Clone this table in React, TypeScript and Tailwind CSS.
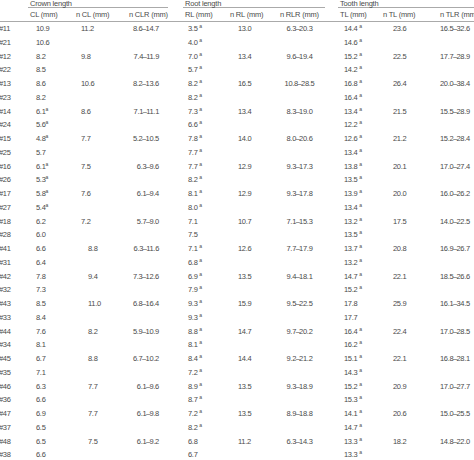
import React from "react";

type Row = string[];

// label, CL, nCL, nCLR, RL, nRL, nRLR, TL, nTL, nTLR  ("a" suffix = superscript)
const rows: Row[] = [
  ["#11", "10.9", "11.2", "8.6–14.7", "3.5a", "13.0", "6.3–20.3", "14.4a", "23.6", "16.5–32.6"],
  ["#21", "10.6", "", "", "4.0a", "", "", "14.6a", "", ""],
  ["#12", "8.2", "9.8", "7.4–11.9", "7.0a", "13.4", "9.6–19.4", "15.2a", "22.5", "17.7–28.9"],
  ["#22", "8.5", "", "", "5.7a", "", "", "14.2a", "", ""],
  ["#13", "8.6", "10.6", "8.2–13.6", "8.2a", "16.5", "10.8–28.5", "16.8a", "26.4", "20.0–38.4"],
  ["#23", "8.2", "", "", "8.2a", "", "", "16.4a", "", ""],
  ["#14", "6.1a", "8.6", "7.1–11.1", "7.3a", "13.4", "8.3–19.0", "13.4a", "21.5", "15.5–28.9"],
  ["#24", "5.6a", "", "", "6.6a", "", "", "12.2a", "", ""],
  ["#15", "4.8a", "7.7", "5.2–10.5", "7.8a", "14.0", "8.0–20.6", "12.6a", "21.2", "15.2–28.4"],
  ["#25", "5.7", "", "", "7.7a", "", "", "13.4a", "", ""],
  ["#16", "6.1a", "7.5", "6.3–9.6", "7.7a", "12.9", "9.3–17.3", "13.8a", "20.1", "17.0–27.4"],
  ["#26", "5.3a", "", "", "8.2a", "", "", "13.5a", "", ""],
  ["#17", "5.8a", "7.6", "6.1–9.4", "8.1a", "12.9", "9.3–17.8", "13.9a", "20.0", "16.0–26.2"],
  ["#27", "5.4a", "", "", "8.0a", "", "", "13.4a", "", ""],
  ["#18", "6.2", "7.2", "5.7–9.0", "7.1", "10.7", "7.1–15.3", "13.2a", "17.5", "14.0–22.5"],
  ["#28", "6.0", "", "", "7.5", "", "", "13.5a", "", ""],
  ["#41", "6.6", "8.8", "6.3–11.6", "7.1a", "12.6", "7.7–17.9", "13.7a", "20.8", "16.9–26.7"],
  ["#31", "6.4", "", "", "6.8a", "", "", "13.2a", "", ""],
  ["#42", "7.8", "9.4", "7.3–12.6", "6.9a", "13.5", "9.4–18.1", "14.7a", "22.1", "18.5–26.6"],
  ["#32", "7.3", "", "", "7.9a", "", "", "15.2a", "", ""],
  ["#43", "8.5", "11.0", "6.8–16.4", "9.3a", "15.9", "9.5–22.5", "17.8", "25.9", "16.1–34.5"],
  ["#33", "8.4", "", "", "9.3a", "", "", "17.7", "", ""],
  ["#44", "7.6", "8.2", "5.9–10.9", "8.8a", "14.7", "9.7–20.2", "16.4a", "22.4", "17.0–28.5"],
  ["#34", "8.1", "", "", "8.1a", "", "", "16.2a", "", ""],
  ["#45", "6.7", "8.8", "6.7–10.2", "8.4a", "14.4", "9.2–21.2", "15.1a", "22.1", "16.8–28.1"],
  ["#35", "7.1", "", "", "7.2a", "", "", "14.3a", "", ""],
  ["#46", "6.3", "7.7", "6.1–9.6", "8.9a", "13.5", "9.3–18.9", "15.2a", "20.9", "17.0–27.7"],
  ["#36", "6.6", "", "", "8.7a", "", "", "15.3a", "", ""],
  ["#47", "6.9", "7.7", "6.1–9.8", "7.2a", "13.5", "8.9–18.8", "14.1a", "20.6", "15.0–25.5"],
  ["#37", "6.5", "", "", "8.2a", "", "", "14.7a", "", ""],
  ["#48", "6.5", "7.5", "6.1–9.2", "6.8", "11.2", "6.3–14.3", "13.3a", "18.2", "14.8–22.0"],
  ["#38", "6.6", "", "", "6.7", "", "", "13.3a", "", ""],
];

const grid =
  "grid grid-cols-[37px_45px_35px_43px_79px_30px_63px_62px_47px_35px] ml-[-1px]";

function Val({ v, spaced }: { v: string; spaced?: boolean }) {
  if (!v.endsWith("a")) return <>{v}</>;
  return (
    <>
      {v.slice(0, -1)}
      {spaced && " "}
      <sup className="text-[5px] top-[-3px]">a</sup>
    </>
  );
}

// range like 8.6–14.7, dash squeezed a little
function Range({ v }: { v: string }) {
  if (!v) return null;
  const [a, b] = v.split("–");
  return (
    <>
      {a}
      <span className="mx-[-0.4px]">–</span>
      {b}
    </>
  );
}

export default function App() {
  return (
    <div
      className="w-[474px] h-[460px] overflow-hidden bg-white text-[#4a4a4a] text-[7.5px] tracking-[-0.3px]"
      style={{ fontFamily: '"Liberation Sans", Arial, sans-serif' }}
    >
      {/* group headers */}
      <div className="flex h-[8px] tracking-[-0.2px] whitespace-nowrap">
        <div className="w-[28px]" />
        <div className="w-[140px] border-b border-[#aaa] pl-[2px] leading-[8px] h-[8px]">
          Crown length
        </div>
        <div className="w-[15px]" />
        <div className="w-[142px] border-b border-[#aaa] pl-[2px] leading-[8px] h-[8px]">
          Root length
        </div>
        <div className="w-[13px]" />
        <div className="flex-1 border-b border-[#aaa] pl-[2px] leading-[8px] h-[8px]">
          Tooth length
        </div>
      </div>

      {/* column headers */}
      <div className="border-b border-[#aaa]">
        <div className={`${grid} h-[13px] leading-[13px] tracking-[-0.2px] whitespace-nowrap`}>
          <div />
          <div className="-ml-[6px]">CL (mm)</div>
          <div className="-ml-[5px]">n CL (mm)</div>
          <div className="pl-[13px]">n CLR (mm)</div>
          <div className="pl-[26px]">RL (mm)</div>
          <div className="-ml-[8px]">n RL (mm)</div>
          <div className="pl-[12px]">n RLR (mm)</div>
          <div className="pl-[9px]">TL (mm)</div>
          <div className="-ml-[10px]">n TL (mm)</div>
          <div>n TLR (mm)</div>
        </div>
      </div>

      {/* body */}
      <div>
        {rows.map((r, i) => (
          <div
            key={r[0]}
            className={`${grid} h-[13.75px] leading-[13.75px] whitespace-nowrap`}
          >
            <div>{r[0]}</div>
            <div>
              <Val v={r[1]} />
            </div>
            <div className={i >= 16 ? "pl-[7px]" : ""}>{r[2]}</div>
            <div className="text-right">
              <Range v={r[3]} />
            </div>
            <div className="pl-[29px]">
              <Val v={r[4]} spaced />
            </div>
            <div>{r[5]}</div>
            <div className="text-center">
              <Range v={r[6]} />
            </div>
            <div className="pl-[13px]">
              <Val v={r[7]} spaced />
            </div>
            <div>{r[8]}</div>
            <div>
              <Range v={r[9]} />
            </div>
          </div>
        ))}
      </div>
    </div>
  );
}
